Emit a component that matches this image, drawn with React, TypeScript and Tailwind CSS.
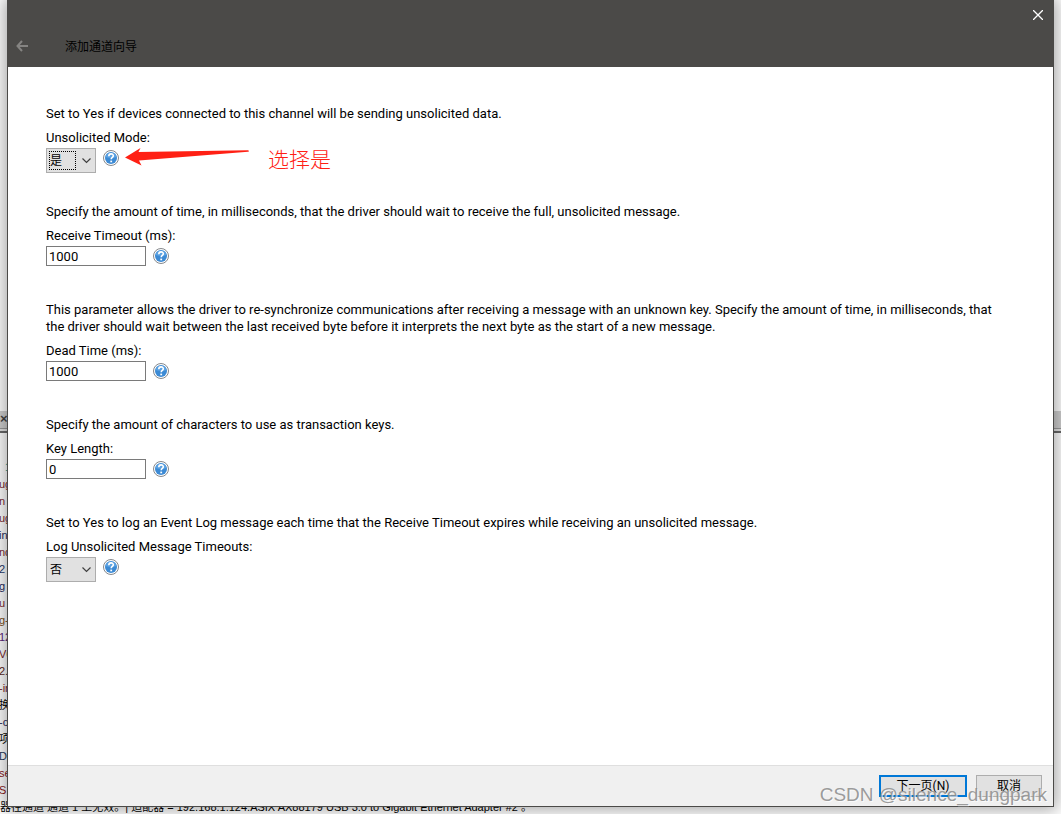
import { useState } from "react";

const LOG_LINES = [
  { text: "  1", color: "text-teal-600" },
  { text: "ug", color: "text-[#7a1f2b]" },
  { text: "n", color: "text-[#7a1f2b]" },
  { text: "ug", color: "text-[#7a1f2b]" },
  { text: "in", color: "text-[#1f2a5a]" },
  { text: "nd", color: "text-[#7a1f2b]" },
  { text: "2", color: "text-[#1f3a6a]" },
  { text: "g", color: "text-[#1f2a5a]" },
  { text: "u", color: "text-[#7a1f2b]" },
  { text: "g-", color: "text-[#7a4f1b]" },
  { text: "12", color: "text-[#5a1f7b]" },
  { text: "V6", color: "text-[#7a1f2b]" },
  { text: "2.", color: "text-[#5a1f1b]" },
  { text: "-in", color: "text-[#7a1f2b]" },
  { text: "换", color: "text-black" },
  { text: "-c", color: "text-[#1f2a5a]" },
  { text: "项", color: "text-black" },
  { text: "De", color: "text-[#1f3a5a]" },
  { text: "se", color: "text-[#8a2020]" },
  { text: "S", color: "text-[#8a2020]" },
];

export default function App() {
  return (
    <div className="relative flex min-h-screen flex-col overflow-hidden bg-white pr-[7px] pb-[7px] pl-[7px] font-['Roboto','Noto_Sans_CJK_SC',sans-serif] text-[13px] leading-[17px] text-black">
      <Backdrop />

      <div
        role="dialog"
        aria-labelledby="wizard-title"
        className="relative flex grow flex-col border-x border-b border-[#4b4a48] bg-white shadow-[0_0_16px_3px_rgba(0,0,0,0.35)]"
      >
        <header className="flex h-[67px] items-start justify-between bg-[#4b4a48]">
          <div className="flex items-center gap-[37px] pt-[37px] pl-2">
            <button type="button" aria-label="Back" className="text-[#858482]">
              <svg width="12" height="12" viewBox="0 0 12 12" fill="none" stroke="currentColor" strokeWidth="2">
                <path d="M6 1 1.5 6 6 11M1.5 6H12" />
              </svg>
            </button>
            <h1 id="wizard-title" className="font-['Noto_Sans_CJK_SC',sans-serif] text-xs leading-[17px]">
              添加通道向导
            </h1>
          </div>
          <button type="button" aria-label="Close" className="mt-2.5 mr-2.5 text-white">
            <svg width="10" height="10" viewBox="0 0 10 10" fill="none" stroke="currentColor" strokeWidth="1.3">
              <path d="M0 0 10 10M10 0 0 10" />
            </svg>
          </button>
        </header>

        <main className="grow space-y-[30px] pt-[38px] pr-12 pl-[38px]">
          <Field
            id="mode"
            label="Unsolicited Mode:"
            help="Set to Yes if devices connected to this channel will be sending unsolicited data."
          >
            <YesNo id="mode" initial="是" focused />
            <HelpIcon />
            <Note />
          </Field>
          <Field
            id="receive"
            label="Receive Timeout (ms):"
            help="Specify the amount of time, in milliseconds, that the driver should wait to receive the full, unsolicited message."
          >
            <NumberBox id="receive" initial="1000" />
            <HelpIcon />
          </Field>
          <Field
            id="dead"
            label="Dead Time (ms):"
            help="This parameter allows the driver to re-synchronize communications after receiving a message with an unknown key. Specify the amount of time, in milliseconds, that the driver should wait between the last received byte before it interprets the next byte as the start of a new message."
          >
            <NumberBox id="dead" initial="1000" />
            <HelpIcon />
          </Field>
          <Field
            id="keylen"
            label="Key Length:"
            help="Specify the amount of characters to use as transaction keys."
          >
            <NumberBox id="keylen" initial="0" />
            <HelpIcon />
          </Field>
          <Field
            id="log"
            label="Log Unsolicited Message Timeouts:"
            help="Set to Yes to log an Event Log message each time that the Receive Timeout expires while receiving an unsolicited message."
          >
            <YesNo id="log" initial="否" />
            <HelpIcon />
          </Field>
        </main>

        <footer className="flex justify-end gap-[9px] border-t border-[#dfdfdf] bg-[#f0f0f0] px-[11px] py-[9px] text-xs">
          <button
            type="button"
            className="flex h-[22px] w-[88px] items-center justify-center border-2 border-[#0078d7] bg-[#e1e1e1]"
          >
            下一页(N)
          </button>
          <button
            type="button"
            className="flex h-[22px] w-[66px] items-center justify-center border border-[#adadad] bg-[#e1e1e1]"
          >
            取消
          </button>
        </footer>
      </div>

      <span className="pointer-events-none absolute right-[14px] bottom-[7px] font-['Liberation_Sans',sans-serif] text-[19px] leading-6 text-[#8f8f8f]/90 [text-shadow:1px_1px_0_#ffffffb0]">
        CSDN @silence_dungpark
      </span>
    </div>
  );
}

// The log window that shows past the dialog's edges.
function Backdrop() {
  return (
    <div
      aria-hidden="true"
      className="absolute inset-0 overflow-hidden font-['Liberation_Sans','Noto_Sans_CJK_SC',sans-serif] text-[11px] leading-[17px] whitespace-pre"
    >
      <div className="flex h-full flex-col">
        <div className="h-[411px] shrink-0" />
        <div className="h-[17px] shrink-0 bg-[#d0d0d0] text-[13px] leading-[15px] font-bold text-[#444]">×</div>
        <div className="h-[5px] shrink-0 border-t border-b-2 border-t-[#9a9a9a] border-b-[#6a6a6a] bg-[#e4e4e4]" />
        <div className="h-[26px] shrink-0" />
        {LOG_LINES.map((line, i) => (
          <div key={i} className={`-ml-px h-[17px] shrink-0 ${line.color}`}>
            {line.text}
          </div>
        ))}
        <div className="h-[17px] shrink-0">
          器往通道 通道 1 上无效。| 适配器 = 192.168.1.124.ASIX AX88179 USB 3.0 to Gigabit Ethernet Adapter #2 。
        </div>
      </div>
    </div>
  );
}

function Field({
  id,
  label,
  help,
  children,
}: {
  id: string;
  label: string;
  help: string;
  children: React.ReactNode;
}) {
  return (
    <section>
      <p>{help}</p>
      <label htmlFor={id} className="mt-[7px] block">
        {label}
      </label>
      <div className="mt-[2px] flex min-h-[25px] items-start gap-[7px]">{children}</div>
    </section>
  );
}

function YesNo({ id, initial, focused = false }: { id: string; initial: string; focused?: boolean }) {
  const [value, setValue] = useState(initial);
  return (
    <div className="relative">
      <select
        id={id}
        value={value}
        onChange={(e) => setValue(e.target.value)}
        className="block h-[25px] w-[50px] appearance-none border border-[#adadad] bg-[#e1e1e1] pl-[3px] text-xs outline-none"
      >
        <option>是</option>
        <option>否</option>
      </select>
      {focused && (
        <span className="pointer-events-none absolute top-[3px] left-[3px] h-[19px] w-[27px] border border-dotted border-black" />
      )}
      <svg
        className="pointer-events-none absolute top-[10px] right-[5px]"
        width="9"
        height="6"
        viewBox="0 0 9 6"
        fill="none"
        stroke="#404040"
        strokeWidth="1.2"
      >
        <path d="M.5.5l4 4 4-4" />
      </svg>
    </div>
  );
}

function NumberBox({ id, initial }: { id: string; initial: string }) {
  const [value, setValue] = useState(initial);
  return (
    <input
      id={id}
      type="text"
      value={value}
      onChange={(e) => setValue(e.target.value)}
      className="h-5 w-[100px] border border-[#7a7a7a] bg-white px-[2px] text-[13px] leading-[17px] outline-none"
    />
  );
}

function HelpIcon() {
  return (
    <svg className="mt-[2px] shrink-0" width="16" height="16" viewBox="0 0 16 16">
      <circle cx="8" cy="8" r="7.5" fill="#fff" stroke="#85888c" />
      <circle cx="8" cy="8" r="6" fill="#3c8ad4" />
      <path d="M2.4 7a5.8 5.8 0 0 1 11.2 0Q8 9 2.4 7Z" fill="#5ba2e2" />
      <path d="M5.8 6.2c0-3 4.5-3 4.5-.4 0 1.6-2.1 1.6-2.1 3.4" fill="none" stroke="#fff" strokeWidth="1.6" />
      <rect x="7.3" y="10.6" width="1.8" height="1.7" fill="#fff" />
    </svg>
  );
}

// Red callout: an arrow at the help icon and its caption.
function Note() {
  return (
    <div className="flex items-start gap-[18px] text-[#ff2014]">
      <svg width="124" height="18" viewBox="0 0 124 18" fill="currentColor" className="overflow-visible">
        <path d="M-1 9.5 14.5 0 12.5 4 122 2.2q2 .8 0 1.6L13 12.5l2.5 5Z" />
      </svg>
      <span className="text-[21px] leading-[25px] font-light">选择是</span>
    </div>
  );
}
